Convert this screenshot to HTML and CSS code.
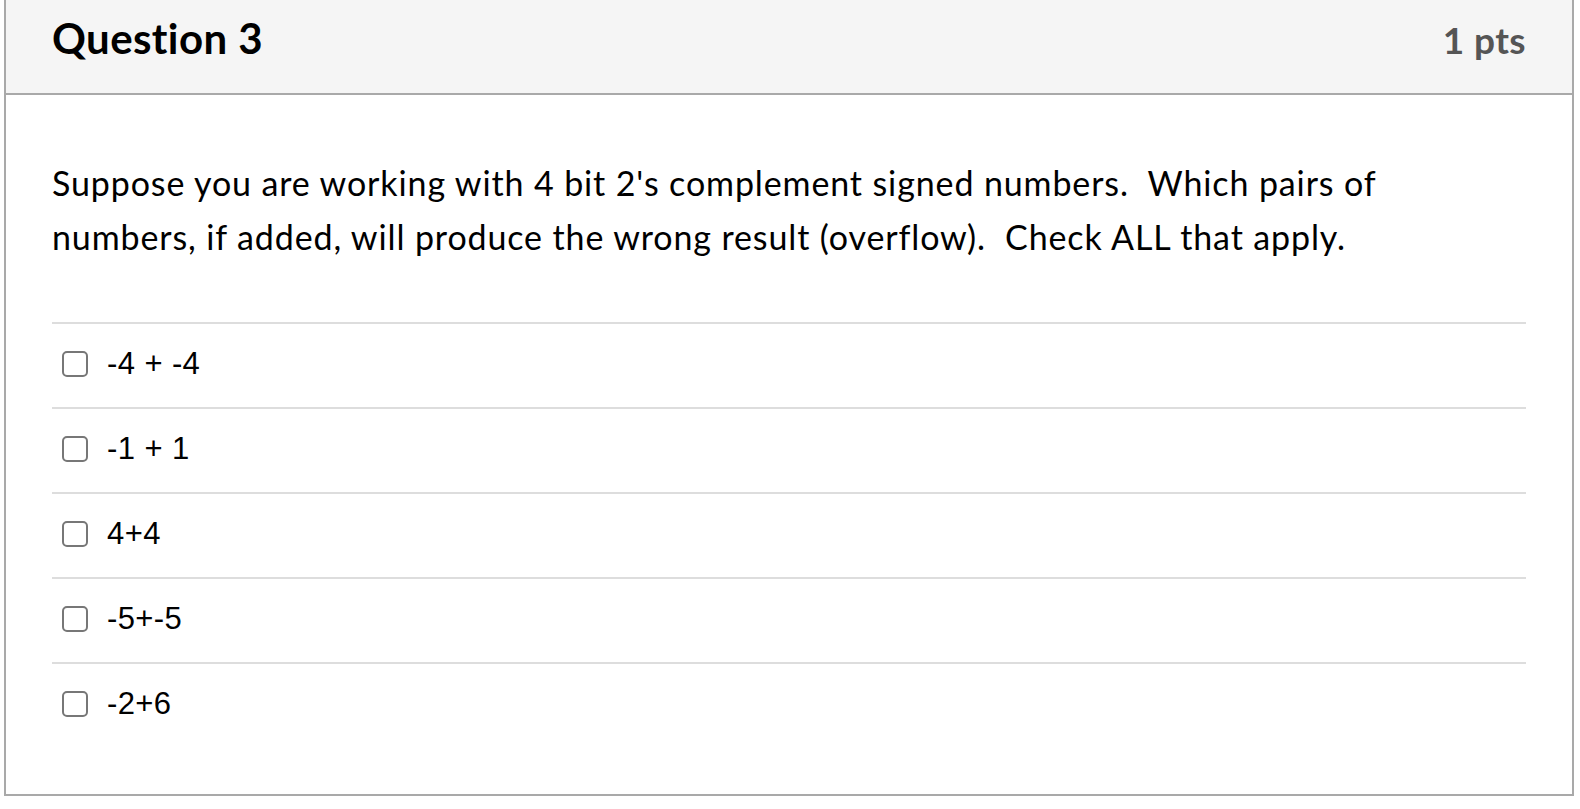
FILE: index.html
```html
<!DOCTYPE html>
<html>
<head>
<meta charset="utf-8">
<link rel="stylesheet" href="styles.css">
</head>
<body>
<div class="question">
  <div class="q-header">
    <h2 class="q-name">Question 3</h2>
    <span class="q-points">1 pts</span>
  </div>
  <div class="q-body">
    <p class="q-text">Suppose you are working with 4 bit 2's complement signed numbers.&nbsp; Which pairs of numbers, if added, will produce the wrong result (overflow).&nbsp; Check ALL that apply.</p>
    <div class="answers">
      <label class="answer"><span class="box"></span><span class="a-text">-4 + -4</span></label>
      <label class="answer"><span class="box"></span><span class="a-text">-1 + 1</span></label>
      <label class="answer"><span class="box"></span><span class="a-text">4+4</span></label>
      <label class="answer"><span class="box"></span><span class="a-text">-5+-5</span></label>
      <label class="answer"><span class="box"></span><span class="a-text">-2+6</span></label>
    </div>
  </div>
</div>
</body>
</html>
```
FILE: styles.css
```css
html, body {
  margin: 0;
  padding: 0;
  background: #ffffff;
}
body {
  font-family: Lato, "Open Sans", sans-serif;
  color: #000;
}
.question {
  margin-left: 4px;
  width: 1570px;
  box-sizing: border-box;
  border: 2px solid #a9a9a9;
  border-top: none;
}
.q-header {
  background: #f5f5f5;
  height: 95px;
  box-sizing: border-box;
  border-bottom: 2px solid #a9a9a9;
  padding: 13px 46px 0 46px;
  display: flex;
  justify-content: space-between;
  align-items: baseline;
}
.q-name {
  margin: 0;
  font-size: 42px;
  letter-spacing: 0.4px;
  line-height: 50px;
  font-weight: 700;
  color: #000;
}
.q-points {
  font-size: 37px;
  letter-spacing: 0.4px;
  font-weight: 700;
  color: #555555;
}
.q-body {
  padding: 61px 46px 47px 46px;
}
.q-text {
  margin: 0;
  max-width: 1420px;
  font-size: 34px;
  letter-spacing: 0.88px;
  line-height: 54px;
  color: #000;
}
.answers {
  margin-top: 58px;
}
.answer {
  display: flex;
  align-items: center;
  border-top: 2px solid #dddddd;
  height: 85px;
  box-sizing: border-box;
  padding: 0 0 4px 10px;
}
.box {
  width: 26px;
  height: 26px;
  box-sizing: border-box;
  border: 2.5px solid #777777;
  border-radius: 5px;
  background: #fff;
  flex: none;
}
.a-text {
  margin-left: 19px;
  font-family: "Liberation Sans", Arial, sans-serif;
  font-size: 31px;
  letter-spacing: 0.4px;
  color: #000;
}
```
